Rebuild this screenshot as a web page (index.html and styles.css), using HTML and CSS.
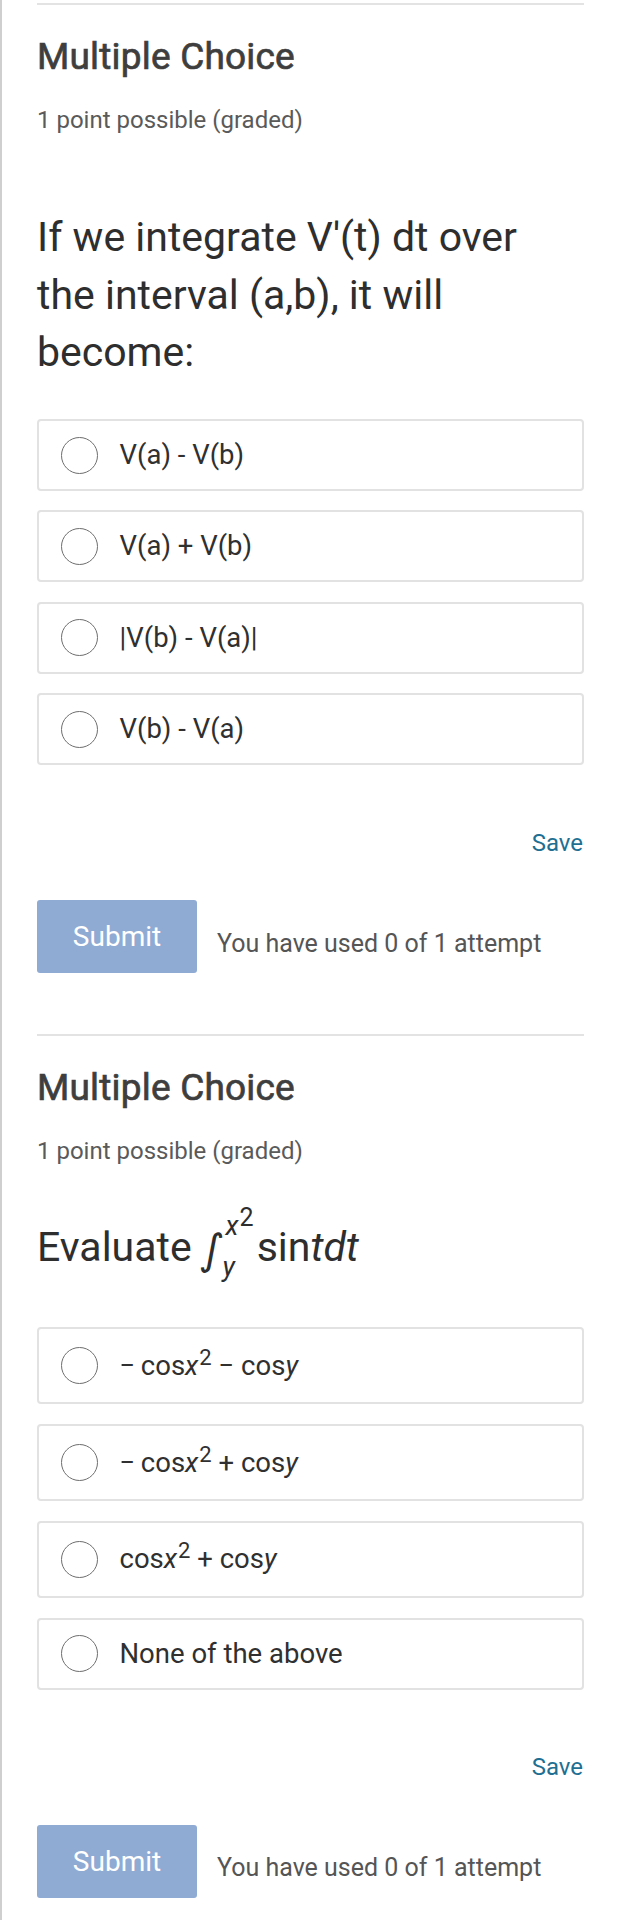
FILE: index.html
```html
<!DOCTYPE html>
<html lang="en">
<head>
<meta charset="utf-8">
<title>Multiple Choice</title>
<link rel="stylesheet" href="styles.css">
</head>
<body>
<div class="page">
  <section class="problem">
    <hr class="rule">
    <h2 class="title">Multiple Choice</h2>
    <p class="meta">1 point possible (graded)</p>
    <p class="question">If we integrate V'(t) dt over the interval (a,b), it will become:</p>
    <div class="choices">
      <label class="choice"><span class="radio"></span><span class="label">V(a) - V(b)</span></label>
      <label class="choice"><span class="radio"></span><span class="label">V(a) + V(b)</span></label>
      <label class="choice"><span class="radio"></span><span class="label">|V(b) - V(a)|</span></label>
      <label class="choice"><span class="radio"></span><span class="label">V(b) - V(a)</span></label>
    </div>
    <div class="save-row"><a class="save">Save</a></div>
    <div class="submit-row">
      <button class="submit">Submit</button>
      <span class="attempts">You have used 0 of 1 attempt</span>
    </div>
  </section>

  <section class="problem">
    <hr class="rule rule-second">
    <h2 class="title">Multiple Choice</h2>
    <p class="meta">1 point possible (graded)</p>
    <p class="question question-math">Evaluate<span class="int">∫</span><span class="limits"><span class="lim-up"><i>x</i><span class="lim-pow">2</span></span><span class="lim-lo"><i>y</i></span></span><span class="integrand">sin<i>tdt</i></span></p>
    <div class="choices choices-math">
      <label class="choice choice-tall"><span class="radio"></span><span class="label">−&#8201;cos<i>x</i><sup class="pow">2</sup> − cos<i>y</i></span></label>
      <label class="choice choice-tall"><span class="radio"></span><span class="label">−&#8201;cos<i>x</i><sup class="pow">2</sup> + cos<i>y</i></span></label>
      <label class="choice choice-tall"><span class="radio"></span><span class="label">cos<i>x</i><sup class="pow">2</sup> + cos<i>y</i></span></label>
      <label class="choice"><span class="radio"></span><span class="label">None of the above</span></label>
    </div>
    <div class="save-row"><a class="save">Save</a></div>
    <div class="submit-row">
      <button class="submit">Submit</button>
      <span class="attempts">You have used 0 of 1 attempt</span>
    </div>
  </section>
</div>
</body>
</html>
```
FILE: styles.css
```css
html, body {
  margin: 0;
  padding: 0;
  background: #ffffff;
}

body {
  font-family: Roboto, "Liberation Sans", Arial, sans-serif;
  color: #333333;
}

.page {
  box-sizing: border-box;
  min-height: 1920px;
  border-left: 2px solid #cfcfcf;
  padding: 0 37px 0 35px;
}

.problem {
  display: flex;
  flex-direction: column;
}

.rule {
  border: 0;
  height: 2px;
  background: #e3e3e3;
  margin: 3px 0 0;
}

.rule-second {
  margin-top: 61px;
}

.title {
  margin: 30px 0 0;
  font-size: 37px;
  line-height: 44px;
  font-weight: 400;
  color: #3e3e3e;
  -webkit-text-stroke: 0.7px #3e3e3e;
  letter-spacing: 0.2px;
}

.meta {
  margin: 26px 0 0;
  font-size: 24px;
  line-height: 30px;
  color: #5a5a5a;
}

.question {
  margin: 74px 0 0;
  max-width: 530px;
  font-size: 41px;
  line-height: 57.5px;
  color: #2e2e2e;
}

.question-math {
  margin-top: 53px;
  max-width: none;
}

.int {
  font-family: "DejaVu Sans", sans-serif;
  font-size: 42px;
  display: inline-block;
  margin-left: 9px;
  vertical-align: -3px;
  transform: skewX(-8deg);
}

.limits {
  display: inline-flex;
  flex-direction: column;
  vertical-align: 26px;
  margin: -7px 0 -6px 0;
  gap: 14px;
  font-size: 27px;
  line-height: 27px;
}

.lim-up, .lim-lo {
  display: block;
  white-space: nowrap;
}

.lim-up {
  margin-left: 3px;
}

.lim-pow {
  position: relative;
  top: -9px;
  font-size: 25px;
  margin-left: 1px;
}

.integrand {
  margin-left: 3px;
}

.choices {
  display: flex;
  flex-direction: column;
  gap: 19.4px;
  margin-top: 37.5px;
}

.choices-math {
  margin-top: 48.3px;
}

.choice {
  box-sizing: border-box;
  height: 72px;
  display: flex;
  align-items: center;
  padding-left: 21.5px;
  border: 2px solid #e2e2e2;
  border-radius: 4px;
  background: #ffffff;
}

.choice-tall {
  height: 77.5px;
}

.radio {
  box-sizing: border-box;
  width: 37px;
  height: 37px;
  border: 1.8px solid #6e6e6e;
  border-radius: 50%;
  flex: none;
  margin-right: 22px;
}

.label {
  font-size: 27.5px;
  line-height: 34px;
  color: #303030;
  white-space: nowrap;
}

.pow {
  font-size: 22px;
  line-height: 0;
  vertical-align: 10px;
  margin-left: 1px;
}

.save-row {
  display: flex;
  justify-content: flex-end;
  margin-top: 62.8px;
}

.save {
  font-size: 24px;
  line-height: 30px;
  color: #1f6f93;
  margin-right: 1px;
}

.submit-row {
  display: flex;
  align-items: flex-end;
  gap: 20px;
  margin-top: 42.2px;
}

.submit {
  width: 160px;
  height: 73px;
  border: 0;
  border-radius: 3px;
  background: #8fabd4;
  color: #ffffff;
  font-family: Roboto, "Liberation Sans", Arial, sans-serif;
  font-size: 28px;
  padding: 0;
}

.attempts {
  font-size: 25px;
  line-height: 30px;
  color: #555555;
  margin-bottom: 14.5px;
}
```
